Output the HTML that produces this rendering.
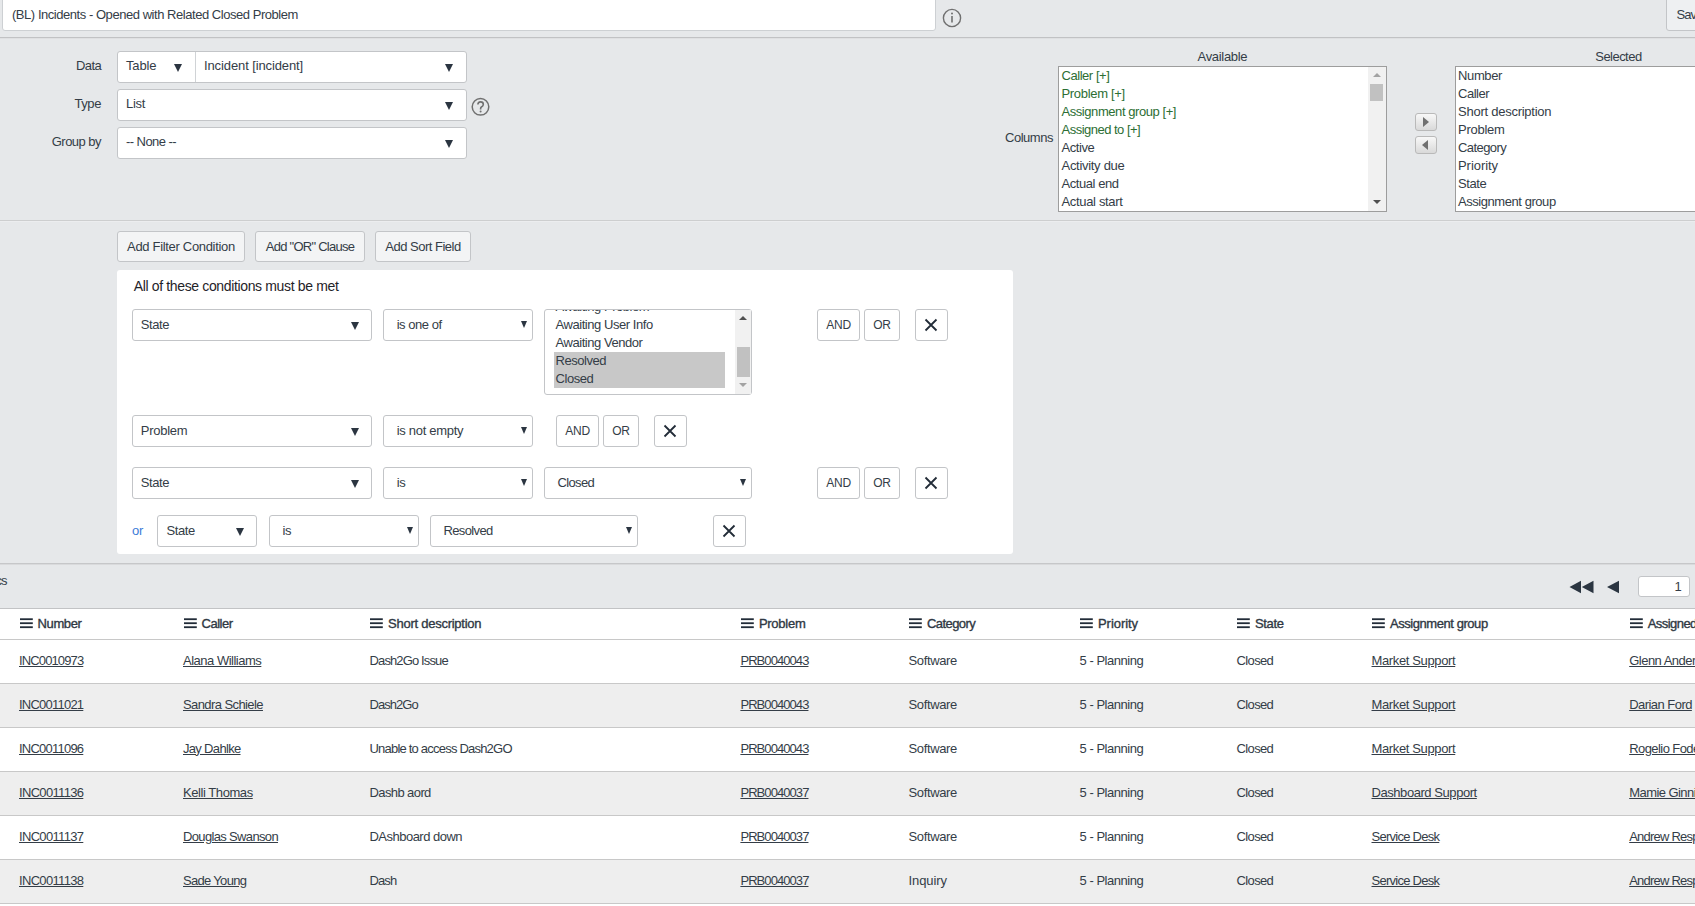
<!DOCTYPE html>
<html><head><meta charset="utf-8">
<style>
*{box-sizing:border-box;margin:0;padding:0}
html,body{width:1695px;height:906px;overflow:hidden;background:#e6e8ea;font-family:"Liberation Sans",sans-serif;color:#343d47;font-size:13px}
body{position:relative}
.a{position:absolute}
.t{position:absolute;white-space:nowrap;line-height:1}
</style></head><body>
<div class="a" style="left:2.0px;top:-3.0px;width:934.0px;height:34.0px;background:#fff;border:1px solid #cdd0d3;border-radius:3px"></div>
<div class="t " style="left:12.00px;top:7.60px;font-size:13px;letter-spacing:-0.458px;">(BL) Incidents - Opened with Related Closed Problem</div>
<svg class="a" style="left:942px;top:8px" width="20" height="20" viewBox="0 0 20 20"><circle cx="10" cy="10" r="8.6" fill="none" stroke="#707070" stroke-width="1.4"/><rect x="9.2" y="8" width="1.6" height="6.5" fill="#707070"/><circle cx="10" cy="5.6" r="1" fill="#707070"/></svg>
<div class="a" style="left:1666.0px;top:-3.0px;width:94.0px;height:34.0px;background:#eef0f2;border:1px solid #c3c5c8;border-radius:3px"></div>
<div class="t " style="left:1676.60px;top:8.20px;font-size:13px;letter-spacing:-0.978px;">Save</div>
<div class="a" style="left:0.0px;top:37.0px;width:1695.0px;height:1.0px;background:#c1c2c4"></div>
<div class="a" style="left:0.0px;top:38.0px;width:1695.0px;height:1.0px;background:#dfe0e2"></div>
<div class="t " style="left:76.05px;top:59.20px;font-size:13px;letter-spacing:-0.630px;">Data</div>
<div class="t " style="left:74.39px;top:97.30px;font-size:13px;letter-spacing:-0.394px;">Type</div>
<div class="t " style="left:51.78px;top:135.30px;font-size:13px;letter-spacing:-0.533px;">Group by</div>
<div class="a" style="left:117.0px;top:51.0px;width:350.0px;height:32.0px;background:#fff;border:1px solid #c3c5c8;border-radius:3px"></div>
<div class="a" style="left:195.0px;top:52.0px;width:1.0px;height:30.0px;background:#d0d3d6"></div>
<div class="t " style="left:126.00px;top:59.20px;font-size:13px;letter-spacing:-0.171px;">Table</div>
<div class="a" style="left:173.8px;top:64.0px;width:0;height:0;border-left:4.8px solid transparent;border-right:4.8px solid transparent;border-top:8.0px solid #2b3541"></div>
<div class="t " style="left:204.00px;top:59.20px;font-size:13px;letter-spacing:-0.111px;">Incident [incident]</div>
<div class="a" style="left:444.8px;top:64.0px;width:0;height:0;border-left:4.8px solid transparent;border-right:4.8px solid transparent;border-top:8.0px solid #2b3541"></div>
<div class="a" style="left:117.0px;top:89.0px;width:350.0px;height:32.0px;background:#fff;border:1px solid #c3c5c8;border-radius:3px"></div>
<div class="t " style="left:126.00px;top:97.30px;font-size:13px;letter-spacing:-0.307px;">List</div>
<div class="a" style="left:444.8px;top:102.0px;width:0;height:0;border-left:4.8px solid transparent;border-right:4.8px solid transparent;border-top:8.0px solid #2b3541"></div>
<div class="a" style="left:117.0px;top:127.0px;width:350.0px;height:32.0px;background:#fff;border:1px solid #c3c5c8;border-radius:3px"></div>
<div class="t " style="left:126.00px;top:135.30px;font-size:13px;letter-spacing:-0.561px;">-- None --</div>
<div class="a" style="left:444.8px;top:140.0px;width:0;height:0;border-left:4.8px solid transparent;border-right:4.8px solid transparent;border-top:8.0px solid #2b3541"></div>
<svg class="a" style="left:471px;top:97px" width="20" height="20" viewBox="0 0 20 20"><circle cx="9.5" cy="9.8" r="8.3" fill="none" stroke="#707070" stroke-width="1.5"/><path d="M6.9 7.6 Q6.9 4.9 9.6 4.9 Q12.3 4.9 12.3 7.4 Q12.3 9 10.4 10 Q9.6 10.5 9.6 11.8 V12.5" fill="none" stroke="#707070" stroke-width="1.6"/><circle cx="9.6" cy="14.6" r="1" fill="#707070"/></svg>
<div class="t " style="left:1197.50px;top:49.80px;font-size:13px;letter-spacing:-0.305px;">Available</div>
<div class="t " style="left:1595.30px;top:49.80px;font-size:13px;letter-spacing:-0.539px;">Selected</div>
<div class="t " style="left:1005.02px;top:130.60px;font-size:13px;letter-spacing:-0.476px;">Columns</div>
<div class="a" style="left:1058.0px;top:66.0px;width:329.0px;height:146.0px;background:#fff;border:1px solid #9d9d9d"></div>
<div class="t " style="left:1061.50px;top:68.80px;font-size:13px;letter-spacing:-0.450px;color:#2c6e33;">Caller [+]</div>
<div class="t " style="left:1061.50px;top:86.80px;font-size:13px;letter-spacing:-0.318px;color:#2c6e33;">Problem [+]</div>
<div class="t " style="left:1061.50px;top:104.80px;font-size:13px;letter-spacing:-0.437px;color:#2c6e33;">Assignment group [+]</div>
<div class="t " style="left:1061.50px;top:122.80px;font-size:13px;letter-spacing:-0.510px;color:#2c6e33;">Assigned to [+]</div>
<div class="t " style="left:1061.50px;top:140.80px;font-size:13px;letter-spacing:-0.445px;">Active</div>
<div class="t " style="left:1061.50px;top:158.80px;font-size:13px;letter-spacing:-0.294px;">Activity due</div>
<div class="t " style="left:1061.50px;top:176.80px;font-size:13px;letter-spacing:-0.441px;">Actual end</div>
<div class="t " style="left:1061.50px;top:194.80px;font-size:13px;letter-spacing:-0.333px;">Actual start</div>
<div class="a" style="left:1368.0px;top:67.0px;width:18.0px;height:144.0px;background:#f1f1f1"></div>
<div class="a" style="left:1370.0px;top:84.0px;width:13.0px;height:17.0px;background:#c1c1c1"></div>
<div class="a" style="left:1372.5px;top:73px;width:0;height:0;border-left:4px solid transparent;border-right:4px solid transparent;border-bottom:4px solid #a3a3a3"></div>
<div class="a" style="left:1372.5px;top:200px;width:0;height:0;border-left:4px solid transparent;border-right:4px solid transparent;border-top:4px solid #505050"></div>
<div class="a" style="left:1415.0px;top:113.0px;width:22.0px;height:18.0px;background:linear-gradient(#f8f8f8,#d9d9d9);border:1px solid #b9b9b9;border-radius:3px"></div>
<div class="a" style="left:1415.0px;top:136.0px;width:22.0px;height:18.0px;background:linear-gradient(#f8f8f8,#d9d9d9);border:1px solid #b9b9b9;border-radius:3px"></div>
<div class="a" style="left:1423px;top:117px;width:0;height:0;border-top:5px solid transparent;border-bottom:5px solid transparent;border-left:6px solid #707070"></div>
<div class="a" style="left:1422px;top:140px;width:0;height:0;border-top:5px solid transparent;border-bottom:5px solid transparent;border-right:6px solid #707070"></div>
<div class="a" style="left:1455.0px;top:66.0px;width:305.0px;height:146.0px;background:#fff;border:1px solid #9d9d9d"></div>
<div class="t " style="left:1458.00px;top:68.80px;font-size:13px;letter-spacing:-0.363px;">Number</div>
<div class="t " style="left:1458.00px;top:86.80px;font-size:13px;letter-spacing:-0.477px;">Caller</div>
<div class="t " style="left:1458.00px;top:104.80px;font-size:13px;letter-spacing:-0.251px;">Short description</div>
<div class="t " style="left:1458.00px;top:122.80px;font-size:13px;letter-spacing:-0.265px;">Problem</div>
<div class="t " style="left:1458.00px;top:140.80px;font-size:13px;letter-spacing:-0.567px;">Category</div>
<div class="t " style="left:1458.00px;top:158.80px;font-size:13px;letter-spacing:-0.060px;">Priority</div>
<div class="t " style="left:1458.00px;top:176.80px;font-size:13px;letter-spacing:-0.396px;">State</div>
<div class="t " style="left:1458.00px;top:194.80px;font-size:13px;letter-spacing:-0.444px;">Assignment group</div>
<div class="a" style="left:0.0px;top:220.0px;width:1695.0px;height:1.0px;background:#cdcecf"></div>
<div class="a" style="left:0.0px;top:221.0px;width:1695.0px;height:1.0px;background:#ecedef"></div>
<div class="a" style="left:117.0px;top:231.0px;width:128.0px;height:31.0px;background:#f3f4f5;border:1px solid #c3c5c8;border-radius:3px"></div>
<div class="t " style="left:127.10px;top:240.30px;font-size:13px;letter-spacing:-0.320px;">Add Filter Condition</div>
<div class="a" style="left:255.0px;top:231.0px;width:110.0px;height:31.0px;background:#f3f4f5;border:1px solid #c3c5c8;border-radius:3px"></div>
<div class="t " style="left:265.78px;top:240.30px;font-size:13px;letter-spacing:-0.742px;">Add &quot;OR&quot; Clause</div>
<div class="a" style="left:375.0px;top:231.0px;width:96.0px;height:31.0px;background:#f3f4f5;border:1px solid #c3c5c8;border-radius:3px"></div>
<div class="t " style="left:385.25px;top:240.30px;font-size:13px;letter-spacing:-0.492px;">Add Sort Field</div>
<div class="a" style="left:117.0px;top:270.0px;width:896.0px;height:284.0px;background:#fff;border-radius:3px"></div>
<div class="t " style="left:133.70px;top:279.15px;font-size:14px;letter-spacing:-0.353px;color:#1f2329;">All of these conditions must be met</div>
<div class="a" style="left:132.0px;top:309.0px;width:240.0px;height:32.0px;background:#fff;border:1px solid #c3c5c8;border-radius:3px"></div>
<div class="t " style="left:140.80px;top:318.20px;font-size:13px;letter-spacing:-0.396px;">State</div>
<div class="a" style="left:350.8px;top:322.0px;width:0;height:0;border-left:4.8px solid transparent;border-right:4.8px solid transparent;border-top:8.0px solid #2b3541"></div>
<div class="a" style="left:383.0px;top:309.0px;width:150.0px;height:32.0px;background:#fff;border:1px solid #c3c5c8;border-radius:3px"></div>
<div class="t " style="left:396.70px;top:318.20px;font-size:13px;letter-spacing:-0.477px;">is one of</div>
<div class="a" style="left:520.5px;top:321.0px;width:0;height:0;border-left:3.0px solid transparent;border-right:3.0px solid transparent;border-top:7.0px solid #2b3541"></div>
<div class="a" style="left:544.0px;top:309.0px;width:208.0px;height:86.0px;background:#fff;border:1px solid #c3c5c8;border-radius:3px;overflow:hidden"></div>
<div class="a" style="left:554.0px;top:352.0px;width:171.0px;height:36.0px;background:#c8c8c8"></div>
<div class="a" style="left:545px;top:310px;width:190px;height:84px;overflow:hidden"><div class="t" style="left:10.5px;top:-9.80px;font-size:13px;letter-spacing:-0.45px">Awaiting Problem</div><div class="t" style="left:10.5px;top:8.20px;font-size:13px;letter-spacing:-0.45px">Awaiting User Info</div><div class="t" style="left:10.5px;top:26.20px;font-size:13px;letter-spacing:-0.45px">Awaiting Vendor</div><div class="t" style="left:10.5px;top:44.20px;font-size:13px;letter-spacing:-0.45px">Resolved</div><div class="t" style="left:10.5px;top:62.20px;font-size:13px;letter-spacing:-0.45px">Closed</div></div>
<div class="a" style="left:735.0px;top:310.0px;width:16.0px;height:84.0px;background:#f1f1f1"></div>
<div class="a" style="left:737.0px;top:347.0px;width:13.0px;height:30.0px;background:#c1c1c1"></div>
<div class="a" style="left:739px;top:315.5px;width:0;height:0;border-left:4px solid transparent;border-right:4px solid transparent;border-bottom:4px solid #505050"></div>
<div class="a" style="left:739px;top:382.5px;width:0;height:0;border-left:4px solid transparent;border-right:4px solid transparent;border-top:4px solid #a3a3a3"></div>
<div class="a" style="left:817.0px;top:309.0px;width:43.0px;height:32.0px;background:#fff;border:1px solid #c3c5c8;border-radius:3px"></div>
<div class="t " style="left:826.13px;top:319.14px;font-size:12px;letter-spacing:-0.200px;">AND</div>
<div class="a" style="left:864.0px;top:309.0px;width:36.0px;height:32.0px;background:#fff;border:1px solid #c3c5c8;border-radius:3px"></div>
<div class="t " style="left:873.20px;top:319.14px;font-size:12px;letter-spacing:-0.200px;">OR</div>
<div class="a" style="left:915.0px;top:309.0px;width:33.0px;height:32.0px;background:#fff;border:1px solid #c3c5c8;border-radius:3px"></div>
<svg class="a" style="left:923.5px;top:317.8px" width="14" height="14" viewBox="0 0 14 14"><path d="M1.5 1.5 L12.5 12.5 M12.5 1.5 L1.5 12.5" stroke="#222c38" stroke-width="1.8"/></svg>
<div class="a" style="left:132.0px;top:415.0px;width:240.0px;height:32.0px;background:#fff;border:1px solid #c3c5c8;border-radius:3px"></div>
<div class="t " style="left:140.80px;top:424.20px;font-size:13px;letter-spacing:-0.265px;">Problem</div>
<div class="a" style="left:350.8px;top:428.0px;width:0;height:0;border-left:4.8px solid transparent;border-right:4.8px solid transparent;border-top:8.0px solid #2b3541"></div>
<div class="a" style="left:383.0px;top:415.0px;width:150.0px;height:32.0px;background:#fff;border:1px solid #c3c5c8;border-radius:3px"></div>
<div class="t " style="left:396.70px;top:424.20px;font-size:13px;letter-spacing:-0.287px;">is not empty</div>
<div class="a" style="left:520.5px;top:427.0px;width:0;height:0;border-left:3.0px solid transparent;border-right:3.0px solid transparent;border-top:7.0px solid #2b3541"></div>
<div class="a" style="left:556.0px;top:415.0px;width:43.0px;height:32.0px;background:#fff;border:1px solid #c3c5c8;border-radius:3px"></div>
<div class="t " style="left:565.13px;top:425.14px;font-size:12px;letter-spacing:-0.200px;">AND</div>
<div class="a" style="left:603.0px;top:415.0px;width:36.0px;height:32.0px;background:#fff;border:1px solid #c3c5c8;border-radius:3px"></div>
<div class="t " style="left:612.20px;top:425.14px;font-size:12px;letter-spacing:-0.200px;">OR</div>
<div class="a" style="left:654.0px;top:415.0px;width:33.0px;height:32.0px;background:#fff;border:1px solid #c3c5c8;border-radius:3px"></div>
<svg class="a" style="left:662.5px;top:423.8px" width="14" height="14" viewBox="0 0 14 14"><path d="M1.5 1.5 L12.5 12.5 M12.5 1.5 L1.5 12.5" stroke="#222c38" stroke-width="1.8"/></svg>
<div class="a" style="left:132.0px;top:467.0px;width:240.0px;height:32.0px;background:#fff;border:1px solid #c3c5c8;border-radius:3px"></div>
<div class="t " style="left:140.80px;top:476.20px;font-size:13px;letter-spacing:-0.396px;">State</div>
<div class="a" style="left:350.8px;top:480.0px;width:0;height:0;border-left:4.8px solid transparent;border-right:4.8px solid transparent;border-top:8.0px solid #2b3541"></div>
<div class="a" style="left:383.0px;top:467.0px;width:150.0px;height:32.0px;background:#fff;border:1px solid #c3c5c8;border-radius:3px"></div>
<div class="t " style="left:396.70px;top:476.20px;font-size:13px;letter-spacing:-0.418px;">is</div>
<div class="a" style="left:520.5px;top:479.0px;width:0;height:0;border-left:3.0px solid transparent;border-right:3.0px solid transparent;border-top:7.0px solid #2b3541"></div>
<div class="a" style="left:544.0px;top:467.0px;width:208.0px;height:32.0px;background:#fff;border:1px solid #c3c5c8;border-radius:3px"></div>
<div class="t " style="left:557.50px;top:476.20px;font-size:13px;letter-spacing:-0.644px;">Closed</div>
<div class="a" style="left:739.5px;top:479.0px;width:0;height:0;border-left:3.0px solid transparent;border-right:3.0px solid transparent;border-top:7.0px solid #2b3541"></div>
<div class="a" style="left:817.0px;top:467.0px;width:43.0px;height:32.0px;background:#fff;border:1px solid #c3c5c8;border-radius:3px"></div>
<div class="t " style="left:826.13px;top:477.14px;font-size:12px;letter-spacing:-0.200px;">AND</div>
<div class="a" style="left:864.0px;top:467.0px;width:36.0px;height:32.0px;background:#fff;border:1px solid #c3c5c8;border-radius:3px"></div>
<div class="t " style="left:873.20px;top:477.14px;font-size:12px;letter-spacing:-0.200px;">OR</div>
<div class="a" style="left:915.0px;top:467.0px;width:33.0px;height:32.0px;background:#fff;border:1px solid #c3c5c8;border-radius:3px"></div>
<svg class="a" style="left:923.5px;top:475.8px" width="14" height="14" viewBox="0 0 14 14"><path d="M1.5 1.5 L12.5 12.5 M12.5 1.5 L1.5 12.5" stroke="#222c38" stroke-width="1.8"/></svg>
<div class="t " style="left:131.90px;top:523.60px;font-size:13px;letter-spacing:-0.107px;color:#3b7bd7;">or</div>
<div class="a" style="left:157.0px;top:515.0px;width:100.0px;height:32.0px;background:#fff;border:1px solid #c3c5c8;border-radius:3px"></div>
<div class="t " style="left:166.50px;top:524.20px;font-size:13px;letter-spacing:-0.396px;">State</div>
<div class="a" style="left:235.8px;top:528.0px;width:0;height:0;border-left:4.8px solid transparent;border-right:4.8px solid transparent;border-top:8.0px solid #2b3541"></div>
<div class="a" style="left:269.0px;top:515.0px;width:150.0px;height:32.0px;background:#fff;border:1px solid #c3c5c8;border-radius:3px"></div>
<div class="t " style="left:282.50px;top:524.20px;font-size:13px;letter-spacing:-0.418px;">is</div>
<div class="a" style="left:406.5px;top:527.0px;width:0;height:0;border-left:3.0px solid transparent;border-right:3.0px solid transparent;border-top:7.0px solid #2b3541"></div>
<div class="a" style="left:430.0px;top:515.0px;width:208.0px;height:32.0px;background:#fff;border:1px solid #c3c5c8;border-radius:3px"></div>
<div class="t " style="left:443.50px;top:524.20px;font-size:13px;letter-spacing:-0.627px;">Resolved</div>
<div class="a" style="left:625.5px;top:527.0px;width:0;height:0;border-left:3.0px solid transparent;border-right:3.0px solid transparent;border-top:7.0px solid #2b3541"></div>
<div class="a" style="left:713.0px;top:515.0px;width:33.0px;height:32.0px;background:#fff;border:1px solid #c3c5c8;border-radius:3px"></div>
<svg class="a" style="left:721.5px;top:523.8px" width="14" height="14" viewBox="0 0 14 14"><path d="M1.5 1.5 L12.5 12.5 M12.5 1.5 L1.5 12.5" stroke="#222c38" stroke-width="1.8"/></svg>
<div class="a" style="left:0.0px;top:563.0px;width:1695.0px;height:1.0px;background:#c6c7c9"></div>
<div class="a" style="left:0.0px;top:564.0px;width:1695.0px;height:1.0px;background:#d9dadc"></div>
<div class="t " style="left:-4.50px;top:574.00px;font-size:13px;letter-spacing:-0.936px;">cs</div>
<svg class="a" style="left:1569px;top:580px" width="52" height="14" viewBox="0 0 52 14"><path d="M0.5 7 L12 0.8 V13.2 Z M12.8 7 L24.5 0.8 V13.2 Z M38 7 L50 0.8 V13.2 Z" fill="#2b3541"/></svg>
<div class="a" style="left:1638.0px;top:576.0px;width:52.0px;height:21.0px;background:#fff;border:1px solid #c3c5c8;border-radius:3px"></div>
<div class="t " style="left:1674.40px;top:580.30px;font-size:13px;letter-spacing:-0.773px;">1</div>
<div class="a" style="left:0.0px;top:608.0px;width:1695.0px;height:298.0px;background:#fff"></div>
<div class="a" style="left:0.0px;top:608.0px;width:1695.0px;height:1.0px;background:#c2c3c5"></div>
<div class="a" style="left:0.0px;top:639.0px;width:1695.0px;height:1.0px;background:#c8c8c8"></div>
<svg class="a" style="left:20.0px;top:618px" width="14" height="11" viewBox="0 0 14 11"><rect x="0" y="0.3" width="12.8" height="1.8" fill="#222c38"/><rect x="0" y="4.3" width="12.8" height="1.8" fill="#222c38"/><rect x="0" y="8.3" width="12.8" height="1.8" fill="#222c38"/></svg>
<div class="t " style="left:37.50px;top:616.90px;font-size:13px;letter-spacing:-0.363px;color:#2b3440;-webkit-text-stroke:0.35px #343d47;">Number</div>
<svg class="a" style="left:184.0px;top:618px" width="14" height="11" viewBox="0 0 14 11"><rect x="0" y="0.3" width="12.8" height="1.8" fill="#222c38"/><rect x="0" y="4.3" width="12.8" height="1.8" fill="#222c38"/><rect x="0" y="8.3" width="12.8" height="1.8" fill="#222c38"/></svg>
<div class="t " style="left:201.50px;top:616.90px;font-size:13px;letter-spacing:-0.477px;color:#2b3440;-webkit-text-stroke:0.35px #343d47;">Caller</div>
<svg class="a" style="left:370.0px;top:618px" width="14" height="11" viewBox="0 0 14 11"><rect x="0" y="0.3" width="12.8" height="1.8" fill="#222c38"/><rect x="0" y="4.3" width="12.8" height="1.8" fill="#222c38"/><rect x="0" y="8.3" width="12.8" height="1.8" fill="#222c38"/></svg>
<div class="t " style="left:388.00px;top:616.90px;font-size:13px;letter-spacing:-0.251px;color:#2b3440;-webkit-text-stroke:0.35px #343d47;">Short description</div>
<svg class="a" style="left:741.0px;top:618px" width="14" height="11" viewBox="0 0 14 11"><rect x="0" y="0.3" width="12.8" height="1.8" fill="#222c38"/><rect x="0" y="4.3" width="12.8" height="1.8" fill="#222c38"/><rect x="0" y="8.3" width="12.8" height="1.8" fill="#222c38"/></svg>
<div class="t " style="left:758.90px;top:616.90px;font-size:13px;letter-spacing:-0.265px;color:#2b3440;-webkit-text-stroke:0.35px #343d47;">Problem</div>
<svg class="a" style="left:909.0px;top:618px" width="14" height="11" viewBox="0 0 14 11"><rect x="0" y="0.3" width="12.8" height="1.8" fill="#222c38"/><rect x="0" y="4.3" width="12.8" height="1.8" fill="#222c38"/><rect x="0" y="8.3" width="12.8" height="1.8" fill="#222c38"/></svg>
<div class="t " style="left:927.00px;top:616.90px;font-size:13px;letter-spacing:-0.567px;color:#2b3440;-webkit-text-stroke:0.35px #343d47;">Category</div>
<svg class="a" style="left:1080.0px;top:618px" width="14" height="11" viewBox="0 0 14 11"><rect x="0" y="0.3" width="12.8" height="1.8" fill="#222c38"/><rect x="0" y="4.3" width="12.8" height="1.8" fill="#222c38"/><rect x="0" y="8.3" width="12.8" height="1.8" fill="#222c38"/></svg>
<div class="t " style="left:1098.00px;top:616.90px;font-size:13px;letter-spacing:-0.060px;color:#2b3440;-webkit-text-stroke:0.35px #343d47;">Priority</div>
<svg class="a" style="left:1237.0px;top:618px" width="14" height="11" viewBox="0 0 14 11"><rect x="0" y="0.3" width="12.8" height="1.8" fill="#222c38"/><rect x="0" y="4.3" width="12.8" height="1.8" fill="#222c38"/><rect x="0" y="8.3" width="12.8" height="1.8" fill="#222c38"/></svg>
<div class="t " style="left:1255.10px;top:616.90px;font-size:13px;letter-spacing:-0.396px;color:#2b3440;-webkit-text-stroke:0.35px #343d47;">State</div>
<svg class="a" style="left:1372.0px;top:618px" width="14" height="11" viewBox="0 0 14 11"><rect x="0" y="0.3" width="12.8" height="1.8" fill="#222c38"/><rect x="0" y="4.3" width="12.8" height="1.8" fill="#222c38"/><rect x="0" y="8.3" width="12.8" height="1.8" fill="#222c38"/></svg>
<div class="t " style="left:1390.00px;top:616.90px;font-size:13px;letter-spacing:-0.444px;color:#2b3440;-webkit-text-stroke:0.35px #343d47;">Assignment group</div>
<svg class="a" style="left:1630.0px;top:618px" width="14" height="11" viewBox="0 0 14 11"><rect x="0" y="0.3" width="12.8" height="1.8" fill="#222c38"/><rect x="0" y="4.3" width="12.8" height="1.8" fill="#222c38"/><rect x="0" y="8.3" width="12.8" height="1.8" fill="#222c38"/></svg>
<div class="t " style="left:1647.70px;top:616.90px;font-size:13px;letter-spacing:-0.546px;color:#2b3440;-webkit-text-stroke:0.35px #343d47;">Assigned to</div>
<div class="a" style="left:0.0px;top:683.0px;width:1695.0px;height:1.0px;background:#c8c8c8"></div>
<div class="t " style="left:19.00px;top:653.70px;font-size:13px;letter-spacing:-0.871px;text-decoration:underline;">INC0010973</div>
<div class="t " style="left:183.00px;top:653.70px;font-size:13px;letter-spacing:-0.493px;text-decoration:underline;">Alana Williams</div>
<div class="t " style="left:369.50px;top:653.70px;font-size:13px;letter-spacing:-0.869px;">Dash2Go Issue</div>
<div class="t " style="left:740.40px;top:653.70px;font-size:13px;letter-spacing:-0.927px;text-decoration:underline;">PRB0040043</div>
<div class="t " style="left:908.50px;top:653.70px;font-size:13px;letter-spacing:-0.364px;">Software</div>
<div class="t " style="left:1079.50px;top:653.70px;font-size:13px;letter-spacing:-0.473px;">5 - Planning</div>
<div class="t " style="left:1236.60px;top:653.70px;font-size:13px;letter-spacing:-0.644px;">Closed</div>
<div class="t " style="left:1371.50px;top:653.70px;font-size:13px;letter-spacing:-0.366px;text-decoration:underline;">Market Support</div>
<div class="t " style="left:1629.20px;top:653.70px;font-size:13px;letter-spacing:-0.513px;text-decoration:underline;">Glenn Anderson</div>
<div class="a" style="left:0.0px;top:684.0px;width:1695.0px;height:43.0px;background:#eeeeee"></div>
<div class="a" style="left:0.0px;top:727.0px;width:1695.0px;height:1.0px;background:#c8c8c8"></div>
<div class="t " style="left:19.00px;top:697.70px;font-size:13px;letter-spacing:-0.774px;text-decoration:underline;">INC0011021</div>
<div class="t " style="left:183.00px;top:697.70px;font-size:13px;letter-spacing:-0.586px;text-decoration:underline;">Sandra Schiele</div>
<div class="t " style="left:369.50px;top:697.70px;font-size:13px;letter-spacing:-0.966px;">Dash2Go</div>
<div class="t " style="left:740.40px;top:697.70px;font-size:13px;letter-spacing:-0.927px;text-decoration:underline;">PRB0040043</div>
<div class="t " style="left:908.50px;top:697.70px;font-size:13px;letter-spacing:-0.364px;">Software</div>
<div class="t " style="left:1079.50px;top:697.70px;font-size:13px;letter-spacing:-0.473px;">5 - Planning</div>
<div class="t " style="left:1236.60px;top:697.70px;font-size:13px;letter-spacing:-0.644px;">Closed</div>
<div class="t " style="left:1371.50px;top:697.70px;font-size:13px;letter-spacing:-0.366px;text-decoration:underline;">Market Support</div>
<div class="t " style="left:1629.20px;top:697.70px;font-size:13px;letter-spacing:-0.543px;text-decoration:underline;">Darian Ford</div>
<div class="a" style="left:0.0px;top:771.0px;width:1695.0px;height:1.0px;background:#c8c8c8"></div>
<div class="t " style="left:19.00px;top:741.70px;font-size:13px;letter-spacing:-0.774px;text-decoration:underline;">INC0011096</div>
<div class="t " style="left:183.00px;top:741.70px;font-size:13px;letter-spacing:-0.680px;text-decoration:underline;">Jay Dahlke</div>
<div class="t " style="left:369.50px;top:741.70px;font-size:13px;letter-spacing:-0.789px;">Unable to access Dash2GO</div>
<div class="t " style="left:740.40px;top:741.70px;font-size:13px;letter-spacing:-0.927px;text-decoration:underline;">PRB0040043</div>
<div class="t " style="left:908.50px;top:741.70px;font-size:13px;letter-spacing:-0.364px;">Software</div>
<div class="t " style="left:1079.50px;top:741.70px;font-size:13px;letter-spacing:-0.473px;">5 - Planning</div>
<div class="t " style="left:1236.60px;top:741.70px;font-size:13px;letter-spacing:-0.644px;">Closed</div>
<div class="t " style="left:1371.50px;top:741.70px;font-size:13px;letter-spacing:-0.366px;text-decoration:underline;">Market Support</div>
<div class="t " style="left:1629.20px;top:741.70px;font-size:13px;letter-spacing:-0.568px;text-decoration:underline;">Rogelio Fodera</div>
<div class="a" style="left:0.0px;top:772.0px;width:1695.0px;height:43.0px;background:#eeeeee"></div>
<div class="a" style="left:0.0px;top:815.0px;width:1695.0px;height:1.0px;background:#c8c8c8"></div>
<div class="t " style="left:19.00px;top:785.70px;font-size:13px;letter-spacing:-0.677px;text-decoration:underline;">INC0011136</div>
<div class="t " style="left:183.00px;top:785.70px;font-size:13px;letter-spacing:-0.430px;text-decoration:underline;">Kelli Thomas</div>
<div class="t " style="left:369.50px;top:785.70px;font-size:13px;letter-spacing:-0.595px;">Dashb aord</div>
<div class="t " style="left:740.40px;top:785.70px;font-size:13px;letter-spacing:-0.927px;text-decoration:underline;">PRB0040037</div>
<div class="t " style="left:908.50px;top:785.70px;font-size:13px;letter-spacing:-0.364px;">Software</div>
<div class="t " style="left:1079.50px;top:785.70px;font-size:13px;letter-spacing:-0.473px;">5 - Planning</div>
<div class="t " style="left:1236.60px;top:785.70px;font-size:13px;letter-spacing:-0.644px;">Closed</div>
<div class="t " style="left:1371.50px;top:785.70px;font-size:13px;letter-spacing:-0.438px;text-decoration:underline;">Dashboard Support</div>
<div class="t " style="left:1629.20px;top:785.70px;font-size:13px;letter-spacing:-0.555px;text-decoration:underline;">Mamie Ginnings</div>
<div class="a" style="left:0.0px;top:859.0px;width:1695.0px;height:1.0px;background:#c8c8c8"></div>
<div class="t " style="left:19.00px;top:829.70px;font-size:13px;letter-spacing:-0.677px;text-decoration:underline;">INC0011137</div>
<div class="t " style="left:183.00px;top:829.70px;font-size:13px;letter-spacing:-0.651px;text-decoration:underline;">Douglas Swanson</div>
<div class="t " style="left:369.50px;top:829.70px;font-size:13px;letter-spacing:-0.519px;">DAshboard down</div>
<div class="t " style="left:740.40px;top:829.70px;font-size:13px;letter-spacing:-0.927px;text-decoration:underline;">PRB0040037</div>
<div class="t " style="left:908.50px;top:829.70px;font-size:13px;letter-spacing:-0.364px;">Software</div>
<div class="t " style="left:1079.50px;top:829.70px;font-size:13px;letter-spacing:-0.473px;">5 - Planning</div>
<div class="t " style="left:1236.60px;top:829.70px;font-size:13px;letter-spacing:-0.644px;">Closed</div>
<div class="t " style="left:1371.50px;top:829.70px;font-size:13px;letter-spacing:-0.734px;text-decoration:underline;">Service Desk</div>
<div class="t " style="left:1629.20px;top:829.70px;font-size:13px;letter-spacing:-0.772px;text-decoration:underline;">Andrew Respass</div>
<div class="a" style="left:0.0px;top:860.0px;width:1695.0px;height:43.0px;background:#eeeeee"></div>
<div class="a" style="left:0.0px;top:903.0px;width:1695.0px;height:1.0px;background:#c8c8c8"></div>
<div class="t " style="left:19.00px;top:873.70px;font-size:13px;letter-spacing:-0.677px;text-decoration:underline;">INC0011138</div>
<div class="t " style="left:183.00px;top:873.70px;font-size:13px;letter-spacing:-0.685px;text-decoration:underline;">Sade Young</div>
<div class="t " style="left:369.50px;top:873.70px;font-size:13px;letter-spacing:-0.898px;">Dash</div>
<div class="t " style="left:740.40px;top:873.70px;font-size:13px;letter-spacing:-0.927px;text-decoration:underline;">PRB0040037</div>
<div class="t " style="left:908.50px;top:873.70px;font-size:13px;letter-spacing:-0.105px;">Inquiry</div>
<div class="t " style="left:1079.50px;top:873.70px;font-size:13px;letter-spacing:-0.473px;">5 - Planning</div>
<div class="t " style="left:1236.60px;top:873.70px;font-size:13px;letter-spacing:-0.644px;">Closed</div>
<div class="t " style="left:1371.50px;top:873.70px;font-size:13px;letter-spacing:-0.734px;text-decoration:underline;">Service Desk</div>
<div class="t " style="left:1629.20px;top:873.70px;font-size:13px;letter-spacing:-0.772px;text-decoration:underline;">Andrew Respass</div>
</body></html>
